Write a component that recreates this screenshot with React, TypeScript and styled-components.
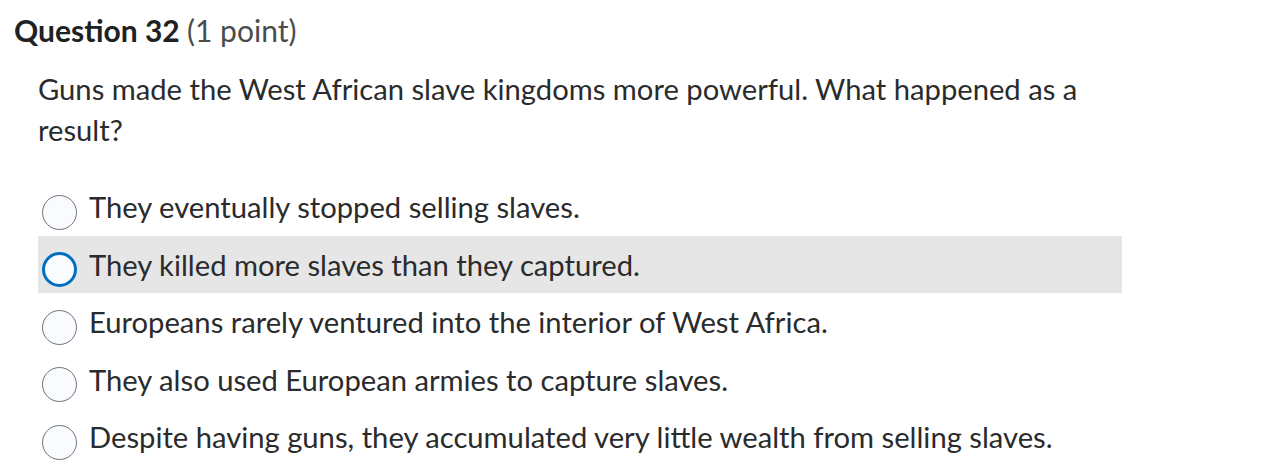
import React from 'react';
import styled, {createGlobalStyle} from 'styled-components';

const GlobalStyle = createGlobalStyle`
  body {
    margin: 0;
    background: #ffffff;
    font-family: Lato, "Noto Sans", sans-serif;
    color: #202122;
  }
`;

const Container = styled.div`
  display: flex;
  flex-direction: column;
  padding: 10px 0 0 14px;
`;

const Title = styled.h2`
  margin: 0;
  font-size: 30px;
  line-height: 40px;
  font-weight: 700;
  color: #202122;
`;

const Points = styled.span`
  font-weight: 400;
  color: #494c4e;
`;

const Body = styled.div`
  display: flex;
  flex-direction: column;
  padding: 18px 0 0 24px;
`;

const Prompt = styled.p`
  margin: 0;
  width: 1084px;
  font-size: 29.2px;
  line-height: 41px;
  color: #2a2b2c;
`;

const Options = styled.div`
  display: flex;
  flex-direction: column;
  margin-top: 28px;
  width: 1084px;
`;

const Option = styled.label<{$hover?: boolean}>`
  display: flex;
  align-items: center;
  gap: 12px;
  height: 57.5px;
  padding-left: 4px;
  background: ${(p) => (p.$hover ? '#e6e6e6' : 'transparent')};
  font-size: 29.2px;
  color: #2a2b2c;
`;

const Radio = styled.span<{$focus?: boolean}>`
  box-sizing: border-box;
  flex: none;
  width: 35px;
  height: 35px;
  margin-top: 11px;
  border-radius: 50%;
  background: #f9fbff;
  border: ${(p) => (p.$focus ? '3px solid #006fbf' : '1px solid #6e7376')};
`;

const options = [
  'They eventually stopped selling slaves.',
  'They killed more slaves than they captured.',
  'Europeans rarely ventured into the interior of West Africa.',
  'They also used European armies to capture slaves.',
  'Despite having guns, they accumulated very little wealth from selling slaves.',
];

const App: React.FC = () => {
  return (
    <Container>
      <GlobalStyle />
      <Title>
        Question 32 <Points>(1 point)</Points>
      </Title>
      <Body>
        <Prompt>
          Guns made the West African slave kingdoms more powerful. What happened as a result?
        </Prompt>
        <Options>
          {options.map((text, i) => (
            <Option key={i} $hover={i === 1}>
              <Radio $focus={i === 1} />
              <span>{text}</span>
            </Option>
          ))}
        </Options>
      </Body>
    </Container>
  );
};

export default App;
